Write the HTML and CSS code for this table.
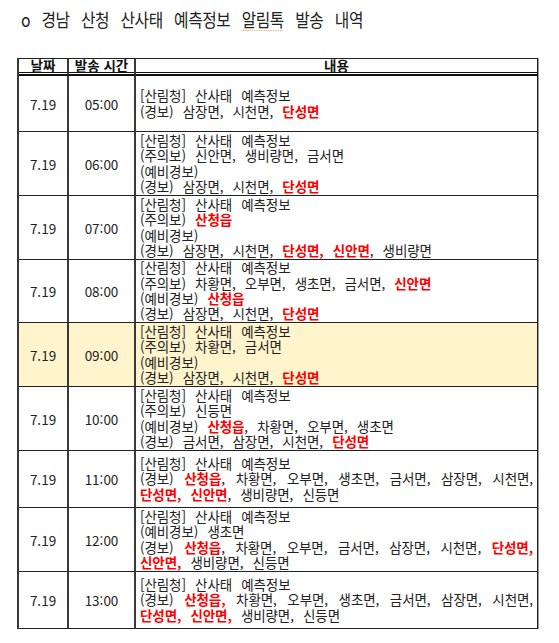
FILE: index.html
```html
<!DOCTYPE html>
<html lang="ko">
<head>
<meta charset="utf-8">
<title>경남 산청 산사태 예측정보 알림톡 발송 내역</title>
<link rel="stylesheet" href="styles.css">
</head>
<body>
<div class="page">
  <h1 class="title"><span class="title-text">o 경남 산청 산사태 예측정보 <span class="spell">알림톡</span> 발송 내역</span></h1>
  <table class="log">
    <thead>
      <tr><th class="c-date">날짜</th><th class="c-time">발송 시간</th><th class="c-body">내용</th></tr>
    </thead>
    <tbody>
      <tr class="r56">
        <td class="date">7.19</td><td class="time">05:00</td>
        <td class="body">
          <div class="ln">[산림청] 산사태 예측정보</div>
          <div class="ln">(경보) 삼장면, 시천면, <b class="red">단성면</b></div>
        </td>
      </tr>
      <tr class="r64">
        <td class="date">7.19</td><td class="time">06:00</td>
        <td class="body">
          <div class="ln">[산림청] 산사태 예측정보</div>
          <div class="ln">(주의보) 신안면, 생비량면, 금서면</div>
          <div class="ln">(예비경보)</div>
          <div class="ln">(경보) 삼장면, 시천면, <b class="red">단성면</b></div>
        </td>
      </tr>
      <tr class="r64">
        <td class="date">7.19</td><td class="time">07:00</td>
        <td class="body">
          <div class="ln">[산림청] 산사태 예측정보</div>
          <div class="ln">(주의보) <b class="red">산청읍</b></div>
          <div class="ln">(예비경보)</div>
          <div class="ln">(경보) 삼장면, 시천면, <b class="red">단성면, 신안면</b>, 생비량면</div>
        </td>
      </tr>
      <tr class="r63">
        <td class="date">7.19</td><td class="time">08:00</td>
        <td class="body">
          <div class="ln">[산림청] 산사태 예측정보</div>
          <div class="ln">(주의보) 차황면, 오부면, 생초면, 금서면, <b class="red">신안면</b></div>
          <div class="ln">(예비경보) <b class="red">산청읍</b></div>
          <div class="ln">(경보) 삼장면, 시천면, <b class="red">단성면</b></div>
        </td>
      </tr>
      <tr class="r64 hl">
        <td class="date">7.19</td><td class="time">09:00</td>
        <td class="body">
          <div class="ln">[산림청] 산사태 예측정보</div>
          <div class="ln">(주의보) 차황면, 금서면</div>
          <div class="ln">(예비경보)</div>
          <div class="ln">(경보) 삼장면, 시천면, <b class="red">단성면</b></div>
        </td>
      </tr>
      <tr class="r64">
        <td class="date">7.19</td><td class="time">10:00</td>
        <td class="body">
          <div class="ln">[산림청] 산사태 예측정보</div>
          <div class="ln">(주의보) 신등면</div>
          <div class="ln">(예비경보) <b class="red">산청읍</b>, 차황면, 오부면, 생초면</div>
          <div class="ln">(경보) 금서면, 삼장면, 시천면, <b class="red">단성면</b></div>
        </td>
      </tr>
      <tr class="r57">
        <td class="date">7.19</td><td class="time">11:00</td>
        <td class="body">
          <div class="ln">[산림청] 산사태 예측정보</div>
          <div class="ln just">(경보) <b class="red">산청읍</b>, 차황면, 오부면, 생초면, 금서면, 삼장면, 시천면,</div>
          <div class="ln"><b class="red">단성면, 신안면</b>, 생비량면, 신등면</div>
        </td>
      </tr>
      <tr class="r64">
        <td class="date">7.19</td><td class="time">12:00</td>
        <td class="body">
          <div class="ln">[산림청] 산사태 예측정보</div>
          <div class="ln">(예비경보) 생초면</div>
          <div class="ln just">(경보) <b class="red">산청읍</b>, 차황면, 오부면, 금서면, 삼장면, 시천면, <b class="red">단성면,</b></div>
          <div class="ln"><b class="red">신안면,</b> 생비량면, 신등면</div>
        </td>
      </tr>
      <tr class="r57">
        <td class="date">7.19</td><td class="time">13:00</td>
        <td class="body">
          <div class="ln">[산림청] 산사태 예측정보</div>
          <div class="ln just">(경보) <b class="red">산청읍,</b> 차황면, 오부면, 생초면, 금서면, 삼장면, 시천면,</div>
          <div class="ln"><b class="red">단성면, 신안면,</b> 생비량면, 신등면</div>
        </td>
      </tr>
    </tbody>
  </table>
</div>
</body>
</html>
```
FILE: styles.css
```css
* { box-sizing: border-box; }
html, body { margin: 0; padding: 0; background: #ffffff; }
body {
  font-family: "Noto Sans CJK KR", "Noto Sans", sans-serif;
  color: #222222;
}
.page { padding-top: 7px; }

.title {
  margin: 0;
  height: 24px;
  padding-left: 21px;
  font-size: 18px;
  line-height: 24px;
  font-weight: normal;
  white-space: nowrap;
}
.title-text {
  display: inline-block;
  transform: scaleX(0.875);
  transform-origin: 0 0;
  letter-spacing: -0.5px;
  word-spacing: 8.5px;
  color: #222222;
}
.spell {
  text-decoration: underline dotted #f0a040;
  text-decoration-thickness: 1px;
  text-underline-offset: 3px;
}

.log {
  margin: 27px 0 0 17px;
  width: 521px;
  table-layout: fixed;
  border-collapse: separate;
  border-spacing: 0;
  border-top: 1px solid #222222;
  border-left: 2px solid #3a3a3a;
  box-shadow: 1px 0 0 #9c9c9c;
  font-size: 13.5px;
}
.log th,
.log td {
  border-right: 2px solid #3a3a3a;
  padding: 0;
}
.log th:last-child,
.log td:last-child {
  border-right: 1px solid #222222;
}
.log th {
  font-size: 13.5px;
  font-weight: bold;
  line-height: 13px;
  padding-bottom: 2px;
  border-bottom: 2px solid #111111;
  box-shadow: inset 0 -1px 0 #ffffff, inset 0 -2px 0 #111111;
  color: #111111;
  text-align: center;
  white-space: nowrap;
}
.c-date { width: 50px; }
.c-time { width: 67px; }
.c-body { width: 402px; }

.log td {
  border-bottom: 1px solid #222222;
  vertical-align: middle;
}
.r56 > td { height: 56px; }
.r57 > td { height: 57px; }
.r63 > td { height: 63px; }
.r64 > td { height: 64px; }
.hl > td { background: #fff4cc; }

.date,
.time {
  text-align: center;
  color: #222222;
}
.body {
  padding: 0 4px !important;
  text-align: left;
  letter-spacing: -0.1px;
  word-spacing: 5.5px;
}
.ln {
  line-height: 15.3px;
  white-space: nowrap;
}
.ln.just {
  white-space: normal;
  word-spacing: 0;
  text-align: justify;
  text-align-last: justify;
}
.red {
  color: #ff0000;
  font-weight: bold;
}
```
